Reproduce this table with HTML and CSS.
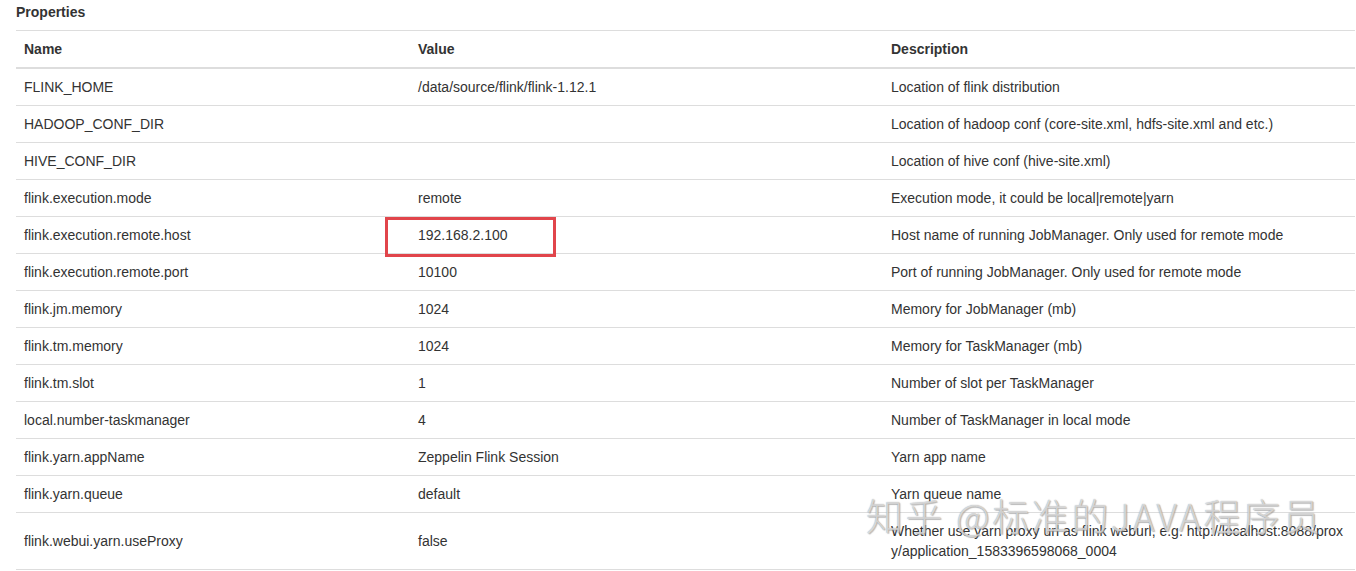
FILE: index.html
```html
<!DOCTYPE html>
<html lang="en">
<head>
<meta charset="utf-8">
<title>Properties</title>
<link rel="stylesheet" href="styles.css">
</head>
<body>
<div class="page">
  <h4 class="title">Properties</h4>
  <table class="props">
    <colgroup>
      <col class="c-name">
      <col class="c-value">
      <col class="c-desc">
    </colgroup>
    <thead>
      <tr><th>Name</th><th>Value</th><th>Description</th></tr>
    </thead>
    <tbody>
      <tr><td>FLINK_HOME</td><td>/data/source/flink/flink-1.12.1</td><td>Location of flink distribution</td></tr>
      <tr><td>HADOOP_CONF_DIR</td><td></td><td>Location of hadoop conf (core-site.xml, hdfs-site.xml and etc.)</td></tr>
      <tr><td>HIVE_CONF_DIR</td><td></td><td>Location of hive conf (hive-site.xml)</td></tr>
      <tr><td>flink.execution.mode</td><td>remote</td><td>Execution mode, it could be local|remote|yarn</td></tr>
      <tr><td>flink.execution.remote.host</td><td class="hl-cell">192.168.2.100<span class="highlight"></span></td><td>Host name of running JobManager. Only used for remote mode</td></tr>
      <tr><td>flink.execution.remote.port</td><td>10100</td><td>Port of running JobManager. Only used for remote mode</td></tr>
      <tr><td>flink.jm.memory</td><td>1024</td><td>Memory for JobManager (mb)</td></tr>
      <tr><td>flink.tm.memory</td><td>1024</td><td>Memory for TaskManager (mb)</td></tr>
      <tr><td>flink.tm.slot</td><td>1</td><td>Number of slot per TaskManager</td></tr>
      <tr><td>local.number-taskmanager</td><td>4</td><td>Number of TaskManager in local mode</td></tr>
      <tr><td>flink.yarn.appName</td><td>Zeppelin Flink Session</td><td>Yarn app name</td></tr>
      <tr><td>flink.yarn.queue</td><td>default</td><td>Yarn queue name</td></tr>
      <tr><td>flink.webui.yarn.useProxy</td><td>false</td><td class="wrap">Whether use yarn proxy url as flink weburl, e.g. http://localhost:8088/proxy/application_1583396598068_0004</td></tr>
    </tbody>
  </table>
  <div class="watermark">知乎 @标准的JAVA程序员</div>
</div>
</body>
</html>
```
FILE: styles.css
```css
html, body {
  margin: 0;
  padding: 0;
  background: #fff;
}
body {
  font-family: "Liberation Sans", Arial, sans-serif;
  font-size: 14px;
  line-height: 20px;
  color: #333;
}
.page {
  position: relative;
  padding-left: 16px;
  width: 1340px;
}
.title {
  margin: 2px 0 8px;
  font-size: 14px;
  line-height: 20px;
  font-weight: bold;
  color: #333;
}
.props {
  width: 1339px;
  table-layout: fixed;
  border-collapse: collapse;
  border-spacing: 0;
  border-top: 1px solid #ddd;
  border-bottom: 1px solid #ddd;
}
.c-name { width: 394px; }
.c-value { width: 473px; }
.c-desc { width: 472px; }
.props th,
.props td {
  padding: 8px;
  text-align: left;
  vertical-align: middle;
  line-height: 20px;
}
.props th {
  font-weight: bold;
  border-bottom: 2px solid #ddd;
}
.props td {
  border-top: 1px solid #ddd;
}
.props tbody tr:first-child td {
  border-top: 0;
}
.hl-cell {
  position: relative;
}
.highlight {
  position: absolute;
  left: -25px;
  top: 0;
  width: 165px;
  height: 34px;
  border: 3px solid #e1454b;
}
.wrap {
  word-break: break-all;
}
.watermark {
  position: absolute;
  left: 866px;
  top: 489px;
  font-family: "Noto Sans CJK SC", "Noto Sans", sans-serif;
  font-size: 37px;
  font-weight: 300;
  letter-spacing: 2.6px;
  line-height: 48px;
  color: rgba(255, 255, 255, 0.6);
  text-shadow: 0 0 1px rgba(120, 120, 120, 0.8), 1px 1px 1px rgba(150, 150, 150, 0.6);
  white-space: nowrap;
  pointer-events: none;
}
```
